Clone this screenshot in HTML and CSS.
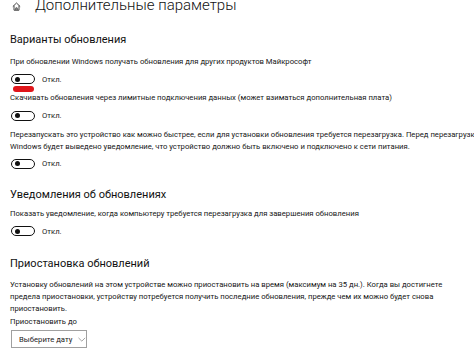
FILE: index.html
```html
<!DOCTYPE html>
<html lang="ru">
<head>
<meta charset="utf-8">
<link rel="stylesheet" href="styles.css">
</head>
<body>
<div class="page">
  <header class="top">
    <svg class="home" width="9" height="9" viewBox="0 0 9 9"><path d="M0.8 4.6 L4.5 1 L8.2 4.6 M2 3.6 V8.2 H7 V3.6 M3.8 8.2 V5.9 H5.2 V8.2" fill="none" stroke="#333" stroke-width="0.9"/></svg>
    <h1 class="title">Дополнительные параметры</h1>
  </header>

  <h2 class="sec-title h-first">Варианты обновления</h2>
  <p class="desc d1">При обновлении Windows получать обновления для других продуктов Майкрософт</p>
  <div class="toggle-row t1"><span class="toggle"><span class="knob"></span></span><span class="state">Откл.</span></div>
  <div class="mark"></div>
  <p class="desc d2">Скачивать обновления через лимитные подключения данных (может взиматься дополнительная плата)</p>
  <div class="toggle-row t2"><span class="toggle"><span class="knob"></span></span><span class="state">Откл.</span></div>
  <p class="desc d3">Перезапускать это устройство как можно быстрее, если для установки обновления требуется перезагрузка. Перед перезагрузкой<br>Windows будет выведено уведомление, что устройство должно быть включено и подключено к сети питания.</p>
  <div class="toggle-row t3"><span class="toggle"><span class="knob"></span></span><span class="state">Откл.</span></div>

  <h2 class="sec-title h2">Уведомления об обновлениях</h2>
  <p class="desc d4">Показать уведомление, когда компьютеру требуется перезагрузка для завершения обновления</p>
  <div class="toggle-row t4"><span class="toggle"><span class="knob"></span></span><span class="state">Откл.</span></div>

  <h2 class="sec-title h3">Приостановка обновлений</h2>
  <p class="desc d5">Установку обновлений на этом устройстве можно приостановить на время (максимум на 35 дн.). Когда вы достигнете<br>предела приостановки, устройству потребуется получить последние обновления, прежде чем их можно будет снова<br>приостановить.</p>
  <p class="desc d6">Приостановить до</p>
  <div class="select"><span class="select-text">Выберите дату</span>
    <svg width="8" height="5" viewBox="0 0 8 5"><path d="M0.5 0.8 L4 4.2 L7.5 0.8" fill="none" stroke="#888" stroke-width="0.8"/></svg>
  </div>
</div>
</body>
</html>
```
FILE: styles.css
```css
html, body { margin: 0; padding: 0; background: #fff; }
body { font-family: Roboto, "Noto Sans", sans-serif; color: #1a1a1a; overflow: hidden; }
.page { width: 474px; height: 351px; overflow: hidden; padding-left: 10px; box-sizing: border-box; }
.top { display: flex; align-items: center; gap: 14px; margin-top: -5px; height: 20px; }
.home { margin-left: 2px; margin-top: 2px; flex: none; }
.title { margin: 0; font-size: 15px; font-weight: 300; line-height: 20px; white-space: nowrap; color: #111; }
.sec-title { margin: 0; font-size: 11px; font-weight: 400; line-height: 14px; color: #111; white-space: nowrap; }
.h-first { margin-top: 18px; }
.h2 { margin-top: 19px; }
.h3 { margin-top: 21px; }
.desc { margin: 0; font-size: 7.7px; line-height: 12px; color: #161616; white-space: nowrap; }
.d1 { margin-top: 8.5px; }
.d2 { margin-top: 0; }
.d3 { margin-top: 8px; }
.d4 { margin-top: 6.5px; }
.d5 { margin-top: 7.5px; }
.d6 { margin-top: 1px; }
.toggle-row { display: flex; align-items: center; gap: 7px; height: 10px; }
.t1 { margin-top: 6.5px; }
.t2 { margin-top: 6.5px; }
.t3 { margin-top: 6px; }
.t4 { margin-top: 6px; }
.toggle { width: 24px; height: 10px; border: 1.5px solid #111; border-radius: 6px; display: flex; align-items: center; padding-left: 2.5px; box-sizing: border-box; flex: none; margin-left: 1px; }
.knob { width: 5px; height: 5px; border-radius: 50%; background: #111; }
.state { font-size: 7.7px; color: #222; }
.mark { width: 21px; height: 6.5px; background: #e0161b; border-radius: 4px; margin: 1.5px 0 0 2.5px; }
.select { margin-top: 2.5px; margin-left: 1px; width: 76px; height: 18px; border: 1.2px solid #a0a0a0; box-sizing: border-box; display: flex; align-items: center; gap: 6px; padding-left: 7px; font-size: 7.7px; color: #222; white-space: nowrap; }
.select-text { flex: none; }
```
